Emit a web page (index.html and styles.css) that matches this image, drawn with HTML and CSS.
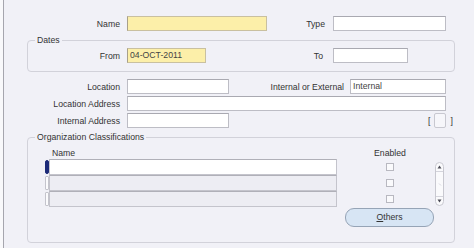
FILE: index.html
```html
<!DOCTYPE html>
<html>
<head>
<meta charset="utf-8">
<link rel="stylesheet" href="styles.css">
</head>
<body>
<div class="page">
  <div class="row row-name">
    <span class="lbl lbl-main">Name</span><div class="field req w-name"></div>
    <span class="lbl lbl-type">Type</span><div class="field w-type"></div>
  </div>

  <fieldset class="group dates">
    <legend>Dates</legend>
    <div class="row">
      <span class="lbl lbl-from">From</span><div class="field req w-from">04-OCT-2011</div>
      <span class="lbl lbl-to">To</span><div class="field w-to"></div>
    </div>
  </fieldset>

  <div class="loc-block">
    <div class="row">
      <span class="lbl lbl-main">Location</span><div class="field w-loc"></div>
      <span class="lbl lbl-ie">Internal or External</span><div class="field w-ie">Internal</div>
    </div>
    <div class="row">
      <span class="lbl lbl-main">Location Address</span><div class="field w-addr"></div>
    </div>
    <div class="row">
      <span class="lbl lbl-main">Internal Address</span><div class="field w-loc"></div>
      <div class="brackets"><span>[</span><div class="mini"></div><span>]</span></div>
    </div>
  </div>

  <fieldset class="group org">
    <legend>Organization Classifications</legend>
    <div class="org-grid">
      <div class="rec-col">
        <div class="col-head name-head">Name</div>
        <div class="rec"><span class="ind cur"></span><div class="cell first"></div></div>
        <div class="rec"><span class="ind"></span><div class="cell"></div></div>
        <div class="rec"><span class="ind"></span><div class="cell"></div></div>
      </div>
      <div class="en-col">
        <div class="col-head">Enabled</div>
        <div class="chk-cell"><span class="chk"></span></div>
        <div class="chk-cell"><span class="chk"></span></div>
        <div class="chk-cell"><span class="chk"></span></div>
      </div>
      <div class="scroll-col">
        <svg width="9" height="44" viewBox="0 0 9 44">
          <rect x="0.5" y="0.5" width="8" height="43" rx="4" fill="#fafafc" stroke="#c8c8d0"/>
          <path d="M2.5 6.5 L6.5 6.5 L4.5 3.5 Z" fill="#4a4a54"/>
          <line x1="1" y1="9.5" x2="8" y2="9.5" stroke="#d4d4dc"/>
          <line x1="4" y1="21.5" x2="6" y2="23.5" stroke="#d8d8e0"/>
          <line x1="1" y1="34.5" x2="8" y2="34.5" stroke="#d4d4dc"/>
          <path d="M2.5 37.5 L6.5 37.5 L4.5 40.5 Z" fill="#4a4a54"/>
        </svg>
      </div>
    </div>
    <div class="btn-row">
      <button class="btn"><u>O</u>thers</button>
    </div>
  </fieldset>
</div>
</body>
</html>
```

FILE: styles.css
```css
html, body {
  margin: 0;
  padding: 0;
}
body {
  background: #f9f9fb;
  font-family: "Liberation Sans", Arial, sans-serif;
  font-size: 8.7px;
  color: #333;
}
.page {
  margin-left: 3px;
  border-left: 1px solid #a6a6ae;
  background: #f1f1f7;
  height: 248px;
  box-sizing: border-box;
  padding-top: 16px;
  overflow: hidden;
}
.row {
  display: flex;
  align-items: center;
  height: 15px;
}
.lbl {
  box-sizing: border-box;
  text-align: right;
  white-space: nowrap;
  flex: none;
}
.lbl-main { width: 123px; padding-right: 7px; }
.lbl-type { width: 66px; padding-right: 8px; }
.lbl-from { width: 99px; padding-right: 7px; }
.lbl-to { width: 127px; padding-right: 10px; }
.lbl-ie { width: 121px; padding-right: 6px; }

.field {
  box-sizing: border-box;
  height: 15px;
  line-height: 13px;
  padding-left: 2px;
  background: #fff;
  border: 1px solid #bdbdc5;
  border-top-color: #a9a9b1;
  flex: none;
  color: #444;
}
.field.req {
  background: #fcefa9;
  border-color: #c9c0a0;
  border-left-color: #a8a08a;
}
.w-name { width: 140px; }
.w-type { width: 113px; }
.w-from { width: 79px; }
.w-to { width: 75px; }
.w-loc { width: 102px; }
.w-ie { width: 96px; }
.w-addr { width: 319px; }

.group {
  box-sizing: border-box;
  width: 428px;
  margin: 0 0 0 23px;
  padding: 0;
  border: 1px solid #d2d2da;
  border-radius: 4px;
  min-inline-size: 0;
}
.group legend {
  margin-left: 7px;
  padding: 0 2px;
  line-height: 11px;
  font-size: 8.7px;
}
.dates {
  margin-top: 4px;
  padding: 2px 0 8px 0;
}

.loc-block {
  margin-top: 7px;
  display: flex;
  flex-direction: column;
  gap: 2px;
}
.brackets {
  margin-left: 199px;
  display: flex;
  align-items: center;
  height: 15px;
}
.mini {
  width: 12px;
  height: 15px;
  box-sizing: border-box;
  margin: 0 4px 0 4px;
  background: #f6f6fa;
  border: 1px solid #c8c8d0;
  border-radius: 2px;
}

.org {
  margin-top: 4px;
  padding: 4px 0 15px 0;
}
.org-grid {
  display: flex;
  align-items: flex-start;
}
.col-head {
  height: 12px;
  line-height: 12px;
  white-space: nowrap;
}
.rec-col {
  margin-left: 17px;
  display: flex;
  flex-direction: column;
}
.name-head {
  padding-left: 7px;
}
.rec {
  display: flex;
  height: 16px;
  align-items: stretch;
}
.ind {
  width: 4px;
  box-sizing: border-box;
  margin: 1px 0;
  background: #fbfbfd;
  border: 1px solid #c4c4cc;
  border-radius: 1px;
}
.ind.cur {
  background: #1c2a78;
  border-color: #1c2a78;
  border-radius: 2px;
}
.cell {
  width: 288px;
  box-sizing: border-box;
  background: #ededf3;
  border: 1px solid #c4c4cc;
  border-top-color: #b0b0b8;
}
.cell.first {
  background: #fff;
}
.en-col {
  margin-left: 37px;
  width: 32px;
  display: flex;
  flex-direction: column;
  align-items: stretch;
  text-align: center;
}
.chk-cell {
  height: 16px;
  display: flex;
  align-items: center;
  justify-content: center;
}
.chk {
  width: 8px;
  height: 8px;
  box-sizing: border-box;
  background: #fafafc;
  border: 1px solid #b8b8c0;
}
.scroll-col {
  margin-left: 29px;
  padding-top: 15px;
}
.scroll-col svg {
  display: block;
}
.btn-row {
  margin-top: 1px;
  padding-left: 317px;
  display: flex;
}
.btn {
  width: 89px;
  height: 19px;
  box-sizing: border-box;
  margin: 0;
  padding: 0;
  background: #d7e5f4;
  border: 1px solid #96a4b6;
  border-radius: 9px;
  font-family: "Liberation Sans", Arial, sans-serif;
  font-size: 8.7px;
  color: #333;
  line-height: 17px;
}
```
